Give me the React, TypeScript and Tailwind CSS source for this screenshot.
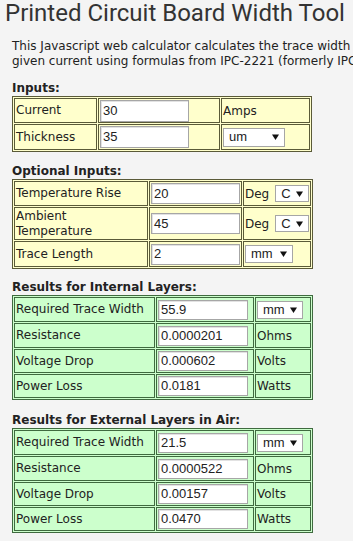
import React from 'react';

type Unit =
  | { kind: 'text'; text: string }
  | { kind: 'select'; text: string; cls: string }
  | { kind: 'deg' };

type Row = { label: React.ReactNode; value: string; unit: Unit; h: string };

type Scheme = { table: string; cell: string };

const yellow: Scheme = {
  table: 'border-[#5a5a38] bg-[#ffffcc]',
  cell: 'border-[#5a5a38] bg-[#ffffcc]',
};

const green: Scheme = {
  table: 'border-[#3f6a3f] bg-[#ccffcc]',
  cell: 'border-[#3f6a3f] bg-[#ccffcc]',
};

function FakeSelect({ text, cls }: { text: string; cls: string }) {
  return (
    <div
      className={`flex items-center justify-between border border-[#a6a6a6] bg-white pl-[5px] pr-[5px] font-['Liberation_Sans',Arial,sans-serif] text-[13px] text-[#222] ${cls}`}
    >
      <span>{text}</span>
      <svg width="7" height="6" viewBox="0 0 7 6" className="shrink-0">
        <path d="M0 0.5H7L3.5 6Z" fill="#111" />
      </svg>
    </div>
  );
}

function TextBox({ value, cls }: { value: string; cls: string }) {
  return (
    <div
      className={`flex items-center border border-[#a6a6a6] bg-white pl-[2px] font-['Liberation_Sans',Arial,sans-serif] text-[13px] text-[#222] shadow-[inset_1px_1px_0_#e2e2e2] ${cls}`}
    >
      {value}
    </div>
  );
}

function Block({
  title,
  scheme,
  cols,
  rows,
  boxCls,
  gap,
}: {
  title: string;
  scheme: Scheme;
  cols: [string, string, string];
  rows: Row[];
  boxCls: string;
  gap: string;
}) {
  return (
    <section className={gap}>
      <h2 className="text-[12px] font-bold leading-[15px] text-[#222]">{title}</h2>
      <table className={`w-[300px] table-fixed border-separate border-spacing-[1px] border ${scheme.table}`}>
        <colgroup>
          <col className={cols[0]} />
          <col className={cols[1]} />
          <col className={cols[2]} />
        </colgroup>
        <tbody>
          {rows.map((r, i) => (
            <tr key={i} className={r.h}>
              <td className={`border px-[1px] align-middle leading-[15px] ${scheme.cell}`}>{r.label}</td>
              <td className={`border px-[1px] align-middle ${scheme.cell}`}>
                <TextBox value={r.value} cls={boxCls} />
              </td>
              <td className={`border px-[1px] align-middle ${scheme.cell}`}>
                {r.unit.kind === 'text' && <span>{r.unit.text}</span>}
                {r.unit.kind === 'select' && <FakeSelect text={r.unit.text} cls={r.unit.cls} />}
                {r.unit.kind === 'deg' && (
                  <div className="flex items-center gap-[6px]">
                    <span>Deg</span>
                    <FakeSelect text="C" cls="h-[17px] w-[34px]" />
                  </div>
                )}
              </td>
            </tr>
          ))}
        </tbody>
      </table>
    </section>
  );
}

const inputs: Row[] = [
  { label: 'Current', value: '30', unit: { kind: 'text', text: 'Amps' }, h: 'h-[25px]' },
  { label: 'Thickness', value: '35', unit: { kind: 'select', text: 'um', cls: 'h-[19px] w-[62px]' }, h: 'h-[26px]' },
];

const optional: Row[] = [
  { label: 'Temperature Rise', value: '20', unit: { kind: 'deg' }, h: 'h-[25px]' },
  {
    label: (
      <>
        Ambient
        <br />
        Temperature
      </>
    ),
    value: '45',
    unit: { kind: 'deg' },
    h: 'h-[33px]',
  },
  { label: 'Trace Length', value: '2', unit: { kind: 'select', text: 'mm', cls: 'h-[18px] w-[48px]' }, h: 'h-[26px]' },
];

const resultRows = (w: string, r: string, v: string, p: string): Row[] => [
  { label: 'Required Trace Width', value: w, unit: { kind: 'select', text: 'mm', cls: 'h-[18px] w-[46px]' }, h: 'h-[25px]' },
  { label: 'Resistance', value: r, unit: { kind: 'text', text: 'Ohms' }, h: 'h-[25px]' },
  { label: 'Voltage Drop', value: v, unit: { kind: 'text', text: 'Volts' }, h: 'h-[24px]' },
  { label: 'Power Loss', value: p, unit: { kind: 'text', text: 'Watts' }, h: 'h-[24px]' },
];

export default function App() {
  return (
    <div className="min-h-[541px] w-[353px] overflow-hidden bg-[#f4f4f4] font-['DejaVu_Sans',Verdana,sans-serif] text-[12px] text-[#222]">
      <h1 className="whitespace-nowrap pl-[5px] font-['Roboto',sans-serif] text-[24px] leading-[27px] text-[#333]">
        Printed Circuit Board Width Tool
      </h1>

      <div className="pl-[12px]">
        <p className="mt-[12px] whitespace-nowrap leading-[15px]">
          This Javascript web calculator calculates the trace width for printed circuit board conductors for a
          <br />
          given current using formulas from IPC-2221 (formerly IPC-D-275).
        </p>

        <Block
          title="Inputs:"
          scheme={yellow}
          cols={['w-[83px]', 'w-[122px]', 'w-[89px]']}
          rows={inputs}
          boxCls="h-[22px] w-[89px]"
          gap="mt-[12px]"
        />
        <Block
          title="Optional Inputs:"
          scheme={yellow}
          cols={['w-[134px]', 'w-[93px]', 'w-[68px]']}
          rows={optional}
          boxCls="h-[21px] w-[89px]"
          gap="mt-[12px]"
        />
        <Block
          title="Results for Internal Layers:"
          scheme={green}
          cols={['w-[141px]', 'w-[98px]', 'w-[56px]']}
          rows={resultRows('55.9', '0.0000201', '0.000602', '0.0181')}
          boxCls="h-[20px] w-[90px]"
          gap="mt-[11px]"
        />
        <Block
          title="Results for External Layers in Air:"
          scheme={green}
          cols={['w-[141px]', 'w-[98px]', 'w-[56px]']}
          rows={resultRows('21.5', '0.0000522', '0.00157', '0.0470')}
          boxCls="h-[20px] w-[90px]"
          gap="mt-[13px]"
        />
      </div>
    </div>
  );
}
